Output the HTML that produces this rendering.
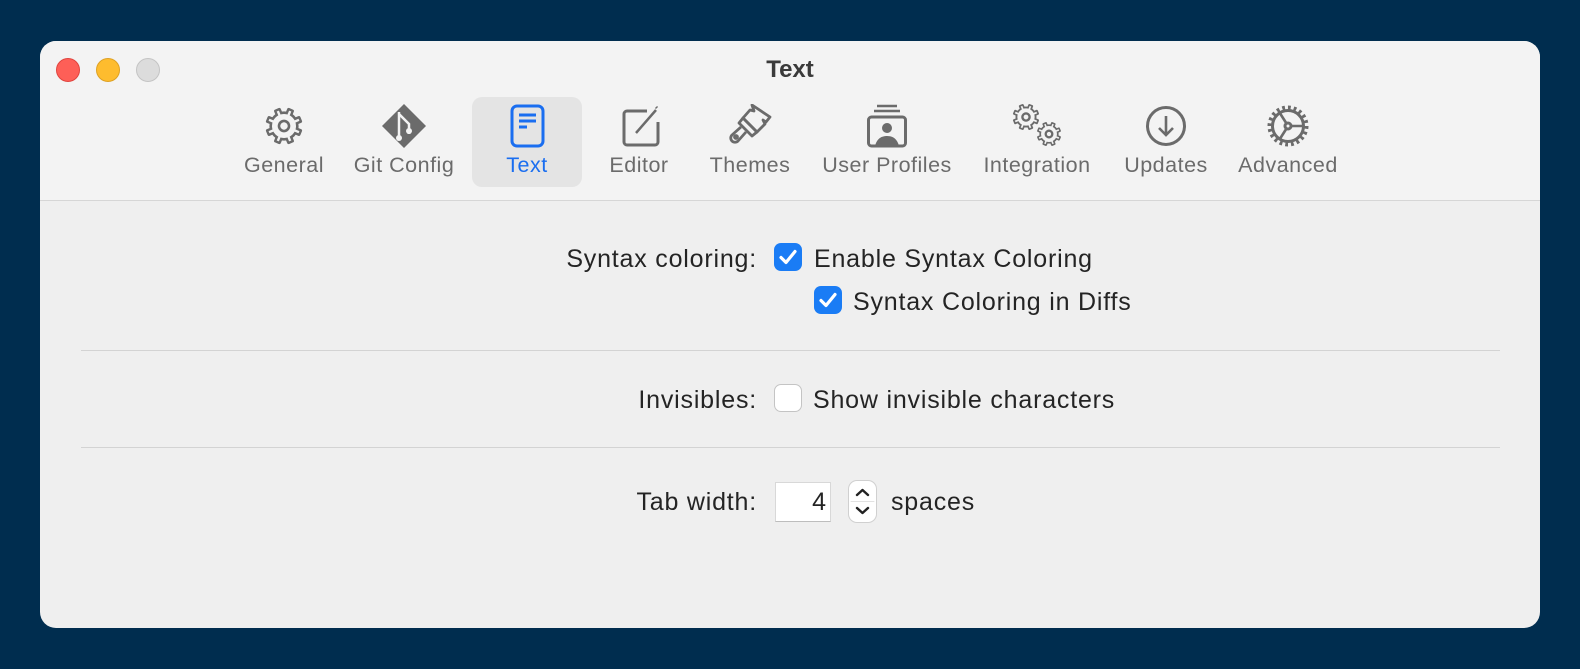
<!DOCTYPE html>
<html><head><meta charset="utf-8"><style>
*{margin:0;padding:0;box-sizing:border-box}
body{width:1580px;height:669px;background:#002d4f;position:relative;overflow:hidden;font-family:"Liberation Sans",sans-serif}
.win{position:absolute;left:40px;top:41px;width:1500px;height:587px;background:#efefef;border-radius:16px;overflow:hidden}
.tb{position:absolute;left:0;top:0;width:1500px;height:160px;background:#f3f3f3;border-bottom:1px solid #d6d6d6}
.dot{position:absolute;top:17px;width:24px;height:24px;border-radius:50%}
.title{position:absolute;left:0;width:1500px;top:15px;text-align:center;font-weight:bold;font-size:24px;color:#3a3a3a}
.item{position:absolute;top:0;width:160px;margin-left:-80px;text-align:center}
.item svg{position:absolute;left:58px;top:63px}
.item .l{position:absolute;top:112px;width:160px;left:0;font-size:21.5px;color:#6b6b6b;letter-spacing:0.5px}
.sel{position:absolute;left:432px;top:56px;width:110px;height:90px;background:#e4e4e4;border-radius:10px}
.t{position:absolute;font-size:25px;letter-spacing:0.8px;color:#242424;white-space:nowrap;line-height:28px}
.r{text-align:right}
.cb{position:absolute;width:28px;height:28px;border-radius:7px;background:#1a7cf5}
.cbe{background:#fff;border:1px solid #c4c4c4}
.sep{position:absolute;left:41px;width:1419px;height:1px;background:#d3d3d3}
</style></head><body>
<svg width="0" height="0" style="position:absolute"><defs>
<g id="gA" fill="#6b6b6b"><circle r="14.6"/><rect x="-3.6" y="-18.6" width="7.2" height="8" rx="1.6"/><rect x="-3.6" y="-18.6" width="7.2" height="8" rx="1.6" transform="rotate(45)"/><rect x="-3.6" y="-18.6" width="7.2" height="8" rx="1.6" transform="rotate(90)"/><rect x="-3.6" y="-18.6" width="7.2" height="8" rx="1.6" transform="rotate(135)"/><rect x="-3.6" y="-18.6" width="7.2" height="8" rx="1.6" transform="rotate(180)"/><rect x="-3.6" y="-18.6" width="7.2" height="8" rx="1.6" transform="rotate(225)"/><rect x="-3.6" y="-18.6" width="7.2" height="8" rx="1.6" transform="rotate(270)"/><rect x="-3.6" y="-18.6" width="7.2" height="8" rx="1.6" transform="rotate(315)"/></g>
<g id="gB" fill="#f3f3f3"><circle r="12"/><rect x="-1.2" y="-16.2" width="2.4" height="6"/><rect x="-1.2" y="-16.2" width="2.4" height="6" transform="rotate(45)"/><rect x="-1.2" y="-16.2" width="2.4" height="6" transform="rotate(90)"/><rect x="-1.2" y="-16.2" width="2.4" height="6" transform="rotate(135)"/><rect x="-1.2" y="-16.2" width="2.4" height="6" transform="rotate(180)"/><rect x="-1.2" y="-16.2" width="2.4" height="6" transform="rotate(225)"/><rect x="-1.2" y="-16.2" width="2.4" height="6" transform="rotate(270)"/><rect x="-1.2" y="-16.2" width="2.4" height="6" transform="rotate(315)"/></g>
</defs></svg>
<div class="win">
<div class="tb">
<div class="dot" style="left:16px;background:#fe5f57;border:1px solid #e0443e"></div>
<div class="dot" style="left:56px;background:#febc2e;border:1px solid #dea123"></div>
<div class="dot" style="left:96px;background:#dcdcdc;border:1px solid #c4c4c4"></div>
<div class="title">Text</div>
<div class="sel"></div>
<!-- General -->
<div class="item" style="left:244px"><svg width="44" height="44" viewBox="0 0 44 44"><g transform="translate(22,22) rotate(22.5)"><use href="#gA"/><use href="#gB"/><circle r="5" fill="none" stroke="#6b6b6b" stroke-width="2.6"/></g></svg><div class="l">General</div></div>
<!-- Git -->
<div class="item" style="left:364px"><svg width="44" height="44" viewBox="0 0 44 44"><path d="M22 0L44 22 22 44 0 22z" fill="#6b6b6b"/><path d="M17 8v28M17 10l10 10v10" stroke="#f3f3f3" stroke-width="2.5" fill="none"/><circle cx="17" cy="34" r="3" fill="#f3f3f3"/><circle cx="27" cy="27" r="3" fill="#f3f3f3"/></svg><div class="l">Git Config</div></div>
<!-- Text -->
<div class="item" style="left:487px"><svg width="44" height="44" viewBox="0 0 44 44" fill="none" stroke="#1a6ef0" stroke-width="3"><rect x="7" y="2" width="31" height="40" rx="5"/><path d="M14 11h17M14 17h17M14 23h8"/></svg><div class="l" style="color:#1a6ef0">Text</div></div>
<!-- Editor -->
<div class="item" style="left:599px"><svg width="44" height="44" viewBox="0 0 44 44" fill="none" stroke="#6b6b6b" stroke-width="3"><path d="M30 7H10a3 3 0 0 0-3 3v28a3 3 0 0 0 3 3h28a3 3 0 0 0 3-3V18"/><path d="M19 29l20-23" stroke-width="2.5"/><path d="M39 3l1 1" stroke-width="3"/></svg><div class="l">Editor</div></div>
<!-- Themes -->
<div class="item" style="left:710px"><svg width="44" height="44" viewBox="0 0 44 44" fill="none" stroke="#6b6b6b" stroke-width="2.8" stroke-linejoin="round"><path d="M24 1l18 12-4 5-3-2 2 4-8 8-14-14 7-8 4 1z"/><path d="M15 14l14 14-5 4-13-13z"/><path d="M13 23l-9 8a4 4 0 0 0 6 6l8-9"/><circle cx="8" cy="33" r="1.5"/></svg><div class="l">Themes</div></div>
<!-- User Profiles -->
<div class="item" style="left:847px"><svg width="44" height="44" viewBox="0 0 44 44"><path d="M12 2h20M9 7h26" stroke="#6b6b6b" stroke-width="2.5"/><rect x="3.5" y="13" width="37" height="29" rx="3" fill="none" stroke="#6b6b6b" stroke-width="3"/><circle cx="22" cy="24" r="5" fill="#6b6b6b"/><path d="M10 42c2-8 7-10 12-10s10 2 12 10z" fill="#6b6b6b"/></svg><div class="l">User Profiles</div></div>
<!-- Integration -->
<div class="item" style="left:997px"><svg width="56" height="48" viewBox="0 0 56 48" style="left:52px;top:60px"><g transform="translate(17,16) scale(0.72) rotate(22.5)"><use href="#gA"/><use href="#gB"/><circle r="5" fill="none" stroke="#6b6b6b" stroke-width="3.3"/></g><g transform="translate(40,33) scale(0.66) rotate(22.5)"><use href="#gA"/><use href="#gB"/><circle r="5" fill="none" stroke="#6b6b6b" stroke-width="3.5"/></g></svg><div class="l">Integration</div></div>
<!-- Updates -->
<div class="item" style="left:1126px"><svg width="44" height="44" viewBox="0 0 44 44" fill="none" stroke="#6b6b6b" stroke-width="3"><circle cx="22" cy="22" r="18.5"/><path d="M22 12v19M15 24l7 7 7-7" stroke-width="2.6"/></svg><div class="l">Updates</div></div>
<!-- Advanced -->
<div class="item" style="left:1248px"><svg width="44" height="44" viewBox="0 0 44 44" fill="none" stroke="#6b6b6b" stroke-width="3"><circle cx="22" cy="22" r="18.5" stroke-width="4" stroke-dasharray="2.8 3"/><circle cx="22" cy="22" r="15.5" stroke-width="3"/><circle cx="22" cy="22" r="3"/><path d="M25 22h13M20.5 19.5l-7-11M20.5 24.5l-7 11" stroke-width="2.6"/></svg><div class="l">Advanced</div></div>
</div>

<div class="t r" style="right:783px;top:204px">Syntax coloring:</div>
<div class="cb" style="left:734px;top:202px"><svg width="28" height="28"><path d="M7 14.5l5 5 9-11" fill="none" stroke="#fff" stroke-width="3.2" stroke-linecap="round" stroke-linejoin="round"/></svg></div>
<div class="t" style="left:774px;top:204px">Enable Syntax Coloring</div>
<div class="cb" style="left:774px;top:245px"><svg width="28" height="28"><path d="M7 14.5l5 5 9-11" fill="none" stroke="#fff" stroke-width="3.2" stroke-linecap="round" stroke-linejoin="round"/></svg></div>
<div class="t" style="left:813px;top:247px">Syntax Coloring in Diffs</div>
<div class="sep" style="top:309px"></div>
<div class="t r" style="right:783px;top:345px">Invisibles:</div>
<div class="cb cbe" style="left:734px;top:343px"></div>
<div class="t" style="left:773px;top:345px">Show invisible characters</div>
<div class="sep" style="top:406px"></div>
<div class="t r" style="right:783px;top:447px">Tab width:</div>
<div style="position:absolute;left:735px;top:441px;width:56px;height:40px;background:#fff;border:1px solid #d8d8d8;border-bottom-color:#bdbdbd"></div>
<div class="t" style="left:735px;width:51px;top:447px;text-align:right;letter-spacing:0">4</div>
<div style="position:absolute;left:809px;top:440px;width:27px;height:41px;background:#fff;border-radius:8px;box-shadow:0 0 0 1px #d0d0d0"><svg width="27" height="41" fill="none" stroke="#222" stroke-width="2.4" stroke-linecap="round" stroke-linejoin="round"><path d="M8 14l5.5-5 5.5 5M8 27l5.5 5 5.5-5"/><path d="M2 20.5h23" stroke="#e2e2e2" stroke-width="1"/></svg></div>
<div class="t" style="left:851px;top:447px">spaces</div>
</div>
</body></html>
